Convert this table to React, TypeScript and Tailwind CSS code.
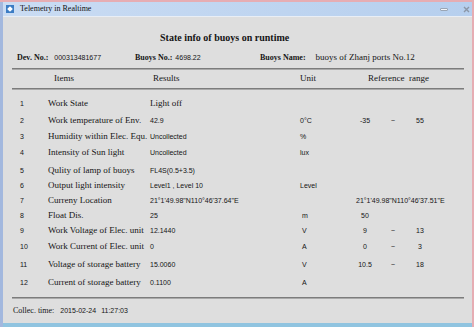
import React from "react";

const serif = { fontFamily: '"Liberation Serif", "Times New Roman", serif' };

type Row = {
  n: string;
  item: string;
  result: string;
  resultSans?: boolean;
  unit?: string;
  unitPad?: boolean;
  min?: string;
  max?: string;
  loc?: string;
  h: string;
};

const rows: Row[] = [
  { n: "1", item: "Work State", result: "Light off", h: "h-[16px]" },
  { n: "2", item: "Work temperature of Env.", result: "42.9", resultSans: true, unit: "0°C", min: "-35", max: "55", h: "h-[18px]" },
  { n: "3", item: "Humidity within Elec. Equ.", result: "Uncollected", resultSans: true, unit: "%", h: "h-[14px]" },
  { n: "4", item: "Intensity of Sun light", result: "Uncollected", resultSans: true, unit: "lux", h: "h-[18px]" },
  { n: "5", item: "Qulity of lamp of buoys", result: "FL4S(0.5+3.5)", resultSans: true, h: "h-[18px]" },
  { n: "6", item: "Output light intensity", result: "Level1 , Level 10", resultSans: true, unit: "Level", h: "h-[12px]" },
  { n: "7", item: "Curreny Location", result: "21°1'49.98\"N110°46'37.64\"E", resultSans: true, loc: "21°1'49.98\"N110°46'37.51\"E", h: "h-[18px]" },
  { n: "8", item: "Float Dis.", result: "25", resultSans: true, unit: "m", unitPad: true, min: "50", h: "h-[12px]" },
  { n: "9", item: "Work Voltage of Elec. unit", result: "12.1440", resultSans: true, unit: "V", unitPad: true, min: "9", max: "13", h: "h-[18px]" },
  { n: "10", item: "Work Current of Elec. unit", result: "0", resultSans: true, unit: "A", unitPad: true, min: "0", max: "3", h: "h-[14px]" },
  { n: "11", item: "Voltage of storage battery", result: "15.0060", resultSans: true, unit: "V", unitPad: true, min: "10.5", max: "18", h: "h-[22px]" },
  { n: "12", item: "Current of storage battery", result: "0.1100", resultSans: true, unit: "A", unitPad: true, h: "h-[14px]" },
];

const sansCls = "font-['Liberation_Sans',Arial,sans-serif] text-[7px]";
const serifCls = "font-['Liberation_Serif','Times_New_Roman',serif] text-[9px]";

export default function App() {
  return (
    <div className="w-[474px] h-[327px] overflow-hidden bg-[#e6adb3] pt-[2px] pr-[2px]">
      <div className="flex flex-col h-[325px] bg-[#dedede] border-l-[3px] border-[#a3b8de] text-[#151515]">
        {/* title bar */}
        <div className="h-[15px] shrink-0 flex items-center bg-gradient-to-r from-[#cadcf3] to-[#b6cfee] border-b border-[#e9eef5]">
          <div className="ml-[3px] w-[8px] h-[8px] bg-[#3b7cc4] flex items-center justify-center">
            <div className="w-[4px] h-[4px] bg-white rotate-45" />
          </div>
          <span className="ml-[6px] leading-none text-[8px] text-[#111]" style={serif}>
            Telemetry in Realtime
          </span>
          <div className="ml-auto flex items-center gap-[15px] mr-[2px]">
            <div className="w-[8px] h-[3px] bg-[#f4f6f9] border border-[#9aa6b6] rounded-[1px]" />
            <svg width="7" height="7" viewBox="0 0 7 7">
              <path d="M1 1L6 6M6 1L1 6" stroke="#8b96a6" strokeWidth="1.4" />
            </svg>
          </div>
        </div>

        {/* heading */}
        <div className="pl-[157px] pt-[6px] h-[20px]">
          <span className="text-[10px] font-bold leading-[14px]" style={serif}>
            State info of buoys on runtime
          </span>
        </div>

        {/* dev row */}
        <div className="flex items-center h-[12px] mt-[15px] pl-[14px]">
          <div className="w-[118px] flex items-center">
            <span className="font-bold text-[8px]" style={serif}>Dev. No.:</span>
            <span className={`${sansCls} ml-[6px]`}>000313481677</span>
          </div>
          <div className="w-[125px] flex items-center">
            <span className="font-bold text-[8px]" style={serif}>Buoys No.:</span>
            <span className={`${sansCls} ml-[3px]`}>4698.22</span>
          </div>
          <div className="flex items-center">
            <span className="font-bold text-[8px]" style={serif}>Buoys Name:</span>
            <span className={`${serifCls} ml-[10px]`}>buoys of Zhanj ports No.12</span>
          </div>
        </div>

        <div className="ml-[9px] w-[452px] h-[2px] mt-[4px] bg-[#7c7c7c] border-b border-[#a9a9a9]" />

        {/* header */}
        <div className={`flex items-center h-[18px] ${serifCls}`}>
          <div className="w-[51px]" />
          <div className="w-[99px]">Items</div>
          <div className="w-[147px]">Results</div>
          <div className="w-[68px]">Unit</div>
          <div>Reference&nbsp; range</div>
        </div>

        <div className="ml-[9px] w-[452px] h-[2px] bg-[#7c7c7c] border-b border-[#a9a9a9]" />

        {/* rows */}
        <div className="flex flex-col pt-[6px] pl-[17px]">
          {rows.map((r) => (
            <div key={r.n} className={`flex items-center ${r.h}`}>
              <div className={`w-[28px] ${sansCls}`}>{r.n}</div>
              <div className={`w-[102px] whitespace-nowrap ${serifCls}`}>{r.item}</div>
              <div className={`w-[150px] whitespace-nowrap ${r.resultSans ? sansCls : serifCls}`}>{r.result}</div>
              <div className={`w-[56px] ${sansCls} ${r.unitPad ? "pl-[2px]" : ""}`}>{r.unit ?? ""}</div>
              {r.loc ? (
                <div className={`whitespace-nowrap ${sansCls}`}>{r.loc}</div>
              ) : (
                <>
                  <div className={`w-[18px] text-center ${sansCls}`}>{r.min ?? ""}</div>
                  <div className={`w-[38px] text-center ${sansCls}`}>{r.max ? "~" : ""}</div>
                  <div className={`w-[16px] text-center ${sansCls}`}>{r.max ?? ""}</div>
                </>
              )}
            </div>
          ))}
        </div>

        <div className="ml-[9px] w-[452px] h-[2px] mt-[7px] bg-[#7c7c7c] border-b border-[#a9a9a9]" />

        {/* footer */}
        <div className="flex items-center h-[20px] pl-[10px] mt-[2px]">
          <span className="text-[8px]" style={serif}>Collec. time:</span>
          <span className={`${sansCls} ml-[6px]`}>2015-02-24</span>
          <span className={`${sansCls} ml-[5px]`}>11:27:03</span>
        </div>

        <div className="mt-auto h-[4px] bg-[#90c4e0]" />
      </div>
    </div>
  );
}
